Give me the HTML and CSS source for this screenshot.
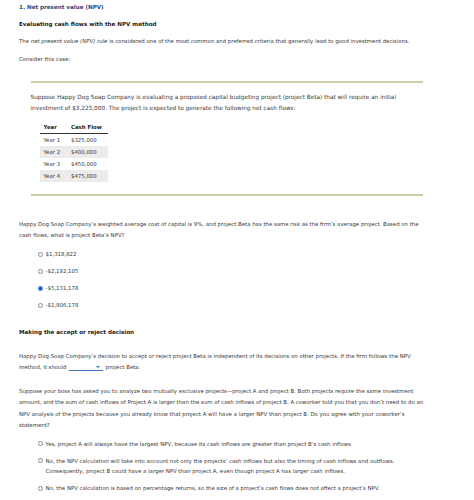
FILE: index.html
```html
<!DOCTYPE html>
<html>
<head>
<meta charset="utf-8">
<link rel="stylesheet" href="styles.css">
</head>
<body>
<div class="page">
  <div class="title">1. Net present value (NPV)</div>
  <div class="heading">Evaluating cash flows with the NPV method</div>
  <p class="para">The <em>net present value (NPV) rule</em> is considered one of the most common and preferred criteria that generally lead to good investment decisions.</p>
  <p class="para">Consider this case:</p>

  <div class="box">
    <p class="box-text">Suppose Happy Dog Soap Company is evaluating a proposed capital budgeting project (project Beta) that will require an initial<br>investment of $3,225,000. The project is expected to generate the following net cash flows:</p>
    <table class="flows">
      <thead>
        <tr><th class="c1">Year</th><th class="c2">Cash Flow</th></tr>
      </thead>
      <tbody>
        <tr><td>Year 1</td><td>$325,000</td></tr>
        <tr class="alt"><td>Year 2</td><td>$400,000</td></tr>
        <tr><td>Year 3</td><td>$450,000</td></tr>
        <tr class="alt"><td>Year 4</td><td>$475,000</td></tr>
      </tbody>
    </table>
  </div>

  <p class="para q1">Happy Dog Soap Company’s weighted average cost of capital is 9%, and project Beta has the same risk as the firm’s average project. Based on the<br>cash flows, what is project Beta’s NPV?</p>

  <ul class="options first">
    <li class="option"><span class="radio"></span><span class="label">$1,318,822</span></li>
    <li class="option"><span class="radio"></span><span class="label">-$2,192,105</span></li>
    <li class="option"><span class="radio checked"></span><span class="label">-$5,131,178</span></li>
    <li class="option"><span class="radio"></span><span class="label">-$1,906,178</span></li>
  </ul>

  <div class="heading h2">Making the accept or reject decision</div>
  <p class="para p-dec">Happy Dog Soap Company’s decision to accept or reject project Beta is independent of its decisions on other projects. If the firm follows the NPV<br>method, it should <span class="select"><span class="arrow"></span></span> project Beta.</p>

  <p class="para p-boss">Suppose your boss has asked you to analyze two mutually exclusive projects—project A and project B. Both projects require the same investment<br>amount, and the sum of cash inflows of Project A is larger than the sum of cash inflows of project B. A coworker told you that you don’t need to do an<br>NPV analysis of the projects because you already know that project A will have a larger NPV than project B. Do you agree with your coworker’s<br>statement?</p>

  <ul class="options second">
    <li class="option"><span class="radio"></span><span class="label">Yes, project A will always have the largest NPV, because its cash inflows are greater than project B’s cash inflows.</span></li>
    <li class="option"><span class="radio"></span><span class="label">No, the NPV calculation will take into account not only the projects’ cash inflows but also the timing of cash inflows and outflows.<br>Consequently, project B could have a larger NPV than project A, even though project A has larger cash inflows.</span></li>
    <li class="option"><span class="radio"></span><span class="label">No, the NPV calculation is based on percentage returns, so the size of a project’s cash flows does not affect a project’s NPV.</span></li>
  </ul>
</div>
</body>
</html>
```

FILE: styles.css
```css
html, body {
  margin: 0;
  padding: 0;
  background: #ffffff;
}

body {
  font-family: "DejaVu Sans", Verdana, sans-serif;
  font-size: 5.4px;
  line-height: 11.5px;
  color: #3a3a3a;
}

.page {
  padding: 1.75px 0 0 19px;
  width: 450px;
  white-space: nowrap;
}

.title {
  font-weight: bold;
  color: #254a7f;
  font-size: 5.6px;
}

.heading {
  font-weight: bold;
  color: #222222;
  font-size: 5.6px;
  margin-top: 5.8px;
}

.para {
  margin: 5.8px 0 0 0;
}

.box {
  margin: 16px 0 0 11.5px;
  width: 392.5px;
  border-top: 2px solid #cdcfa6;
  border-bottom: 2px solid #cdcfa6;
  padding: 9px 0 11.7px 0;
}

.box-text {
  margin: 0;
  font-size: 5.75px;
  line-height: 10.5px;
}

.flows {
  margin: 8px 0 0 9px;
  border-collapse: collapse;
}

.flows th {
  font-weight: bold;
  color: #222222;
  text-align: left;
  height: 12px;
  padding: 0 0 0 4px;
  border-bottom: 1px solid #333333;
  line-height: 12px;
}

.flows th.c1 { width: 23.5px; }
.flows th.c2 { width: 37px; }

.flows td {
  height: 12px;
  padding: 0 0 0 4px;
  line-height: 12px;
}

.flows tr.alt td {
  background: #ececec;
}

.q1 {
  margin-top: 22.85px;
}

.options {
  list-style: none;
  margin: 0;
  padding: 0 0 0 19px;
}

.options.first { margin-top: 7.7px; }
.options.second { margin-top: 7.3px; }

.option {
  display: flex;
  align-items: flex-start;
  line-height: 10.5px;
  margin-bottom: 6.5px;
}

.radio {
  flex: none;
  width: 4.8px;
  height: 4.8px;
  border: 0.6px solid #8a8a8a;
  border-radius: 50%;
  background: #ffffff;
  margin: 2.6px 2.6px 0 0.2px;
  box-sizing: border-box;
}

.radio.checked {
  border-color: #1a6ee0;
  background: radial-gradient(circle, #1553c7 0 1.1px, #5d9df0 1.4px);
}

.h2 {
  margin-top: 16px;
}

.p-dec {
  margin-top: 12.5px;
}

.select {
  display: inline-block;
  position: relative;
  width: 33.4px;
  height: 7px;
  margin: 0 1.5px 0 1px;
  border-bottom: 1px solid #3b78c2;
  vertical-align: -2px;
}

.arrow {
  position: absolute;
  right: 2.5px;
  top: 3px;
  width: 0;
  height: 0;
  border-left: 2.2px solid transparent;
  border-right: 2.2px solid transparent;
  border-top: 2.6px solid #3b78c2;
}

.p-boss {
  margin-top: 11.7px;
}
```
